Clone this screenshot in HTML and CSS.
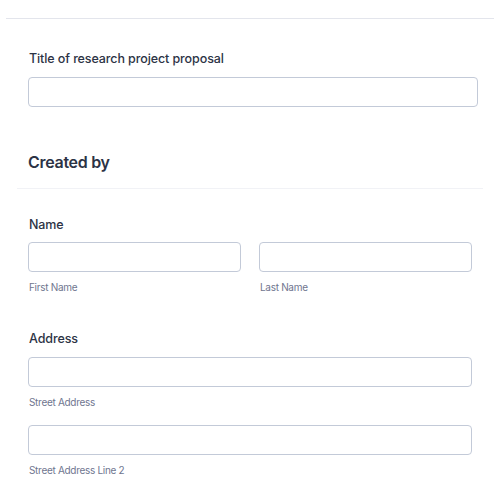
FILE: index.html
```html
<!DOCTYPE html>
<html lang="en">
<head>
<meta charset="utf-8">
<title>Research project proposal</title>
<link rel="stylesheet" href="styles.css">
</head>
<body>
<div class="top-rule"></div>
<form class="form">
  <div class="field field-title">
    <label class="label" for="title">Title of research project proposal</label>
    <input class="input" id="title" type="text">
  </div>

  <div class="section-head">
    <h2 class="heading">Created by</h2>
  </div>

  <div class="field field-name">
    <div class="label">Name</div>
    <div class="row">
      <div class="sub">
        <input class="input" type="text" aria-label="First Name">
        <span class="sublabel">First Name</span>
      </div>
      <div class="sub">
        <input class="input" type="text" aria-label="Last Name">
        <span class="sublabel">Last Name</span>
      </div>
    </div>
  </div>

  <div class="field field-address">
    <div class="label">Address</div>
    <div class="sub">
      <input class="input" type="text" aria-label="Street Address">
      <span class="sublabel">Street Address</span>
    </div>
    <div class="sub sub-line2">
      <input class="input" type="text" aria-label="Street Address Line 2">
      <span class="sublabel">Street Address Line 2</span>
    </div>
  </div>
</form>
</body>
</html>
```

FILE: styles.css
```css
* { box-sizing: border-box; }

html, body {
  margin: 0;
  padding: 0;
  background: #ffffff;
}

body {
  font-family: Inter, "Liberation Sans", sans-serif;
  color: #2c3345;
  width: 500px;
  height: 484px;
  overflow: hidden;
}

.top-rule {
  height: 19px;
  margin: 0 6px;
  border-bottom: 1px solid #e3e5ec;
}

.form {
  display: flex;
  flex-direction: column;
}

.field {
  display: flex;
  flex-direction: column;
  padding: 0 28px;
}

.label {
  display: block;
  font-size: 12.5px;
  line-height: 20px;
  font-weight: 500;
  letter-spacing: -0.1px;
  padding-left: 1px;
}

.input {
  display: block;
  width: 100%;
  height: 30px;
  margin: 0;
  border: 1px solid #c3cad8;
  border-radius: 4px;
  background: #ffffff;
  font: inherit;
}

.field-title {
  margin-top: 30px;
  padding-right: 22px;
  gap: 8px;
}

.section-head {
  margin: 43px 17px 0;
  padding: 0 11px 14px;
  border-bottom: 1px solid #f1f2f6;
}

.heading {
  margin: 0;
  font-size: 16px;
  line-height: 24px;
  font-weight: 600;
  letter-spacing: -0.3px;
}

.field-name {
  margin-top: 26px;
  gap: 7px;
}

.row {
  display: grid;
  grid-template-columns: 1fr 1fr;
  column-gap: 18px;
}

.sub {
  display: flex;
  flex-direction: column;
  gap: 7px;
}

.sublabel {
  font-size: 10px;
  line-height: 16px;
  letter-spacing: -0.3px;
  color: #6f768f;
  padding-left: 1px;
}

.field-address {
  margin-top: 34px;
  gap: 8px;
}

.sub-line2 {
  margin-top: 7px;
}
```
